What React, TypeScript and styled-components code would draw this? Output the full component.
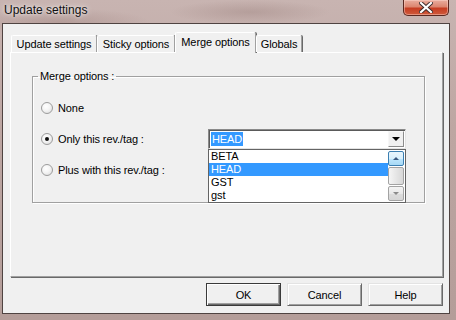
import React from "react";
import styled, { createGlobalStyle } from "styled-components";

const GlobalStyle = createGlobalStyle`
  html, body {
    margin: 0;
    padding: 0;
  }
  *, *::before, *::after {
    box-sizing: border-box;
  }
  body {
    width: 456px;
    height: 320px;
    overflow: hidden;
    font-family: "Liberation Sans", Arial, sans-serif;
    font-size: 11px;
    letter-spacing: -0.1px;
    color: #000;
  }
`;

const Window = styled.div`
  width: 456px;
  height: 320px;
  display: flex;
  flex-direction: column;
  background:
    radial-gradient(ellipse 90px 14px at 60px 22px, rgba(150, 120, 116, 0.35), transparent),
    radial-gradient(ellipse 80px 12px at 250px 12px, rgba(140, 112, 108, 0.3), transparent),
    linear-gradient(180deg, #c8b4b1 0%, #bda6a2 40%, #b49d99 100%);
`;

const TitleBar = styled.div`
  height: 23px;
  flex: none;
  display: flex;
  justify-content: space-between;
  align-items: flex-start;
  padding: 0 7px 0 4px;
`;

const Title = styled.div`
  font-family: "Liberation Sans", Arial, sans-serif;
  font-size: 12px;
  letter-spacing: 0;
  line-height: 20px;
  color: #111;
  text-shadow: 0 0 6px rgba(255, 255, 255, 0.8), 0 0 3px rgba(255, 255, 255, 0.6);
`;

const CloseButton = styled.div`
  width: 46px;
  height: 16px;
  border: 1px solid #5a2820;
  border-top: none;
  border-radius: 0 0 5px 5px;
  display: flex;
  align-items: center;
  justify-content: center;
  background: linear-gradient(
    180deg,
    #e9ad9e 0%,
    #dc8670 45%,
    #c63d22 55%,
    #cf5a3c 100%
  );
  box-shadow: inset 0 0 0 1px rgba(255, 220, 210, 0.45);
`;

const Client = styled.div`
  height: 291px;
  flex: none;
  margin: 0 6px 6px 2px;
  border: 1px solid #4f4341;
  background: #f0f0f0;
  display: flex;
  flex-direction: column;
  padding: 8px 6px 0 7px;
`;

const TabStrip = styled.div`
  height: 20px;
  flex: none;
  display: flex;
  align-items: flex-end;
  padding-left: 1px;
  position: relative;
  z-index: 1;
`;

const Tab = styled.div<{ $active?: boolean; $width: number }>`
  width: ${(p) => p.$width}px;
  height: ${(p) => (p.$active ? "21px" : "17px")};
  margin-bottom: ${(p) => (p.$active ? "-1px" : "0")};
  padding-bottom: ${(p) => (p.$active ? "3px" : "0")};
  display: flex;
  align-items: center;
  justify-content: center;
  background: #f0f0f0;
  border-top: 1px solid #fff;
  border-left: 1px solid #fff;
  border-right: 1px solid #a0a0a0;
  box-shadow: 1px 0 0 #696969;
  border-radius: 2px 2px 0 0;
  white-space: nowrap;
`;

const Panel = styled.div`
  height: 225px;
  flex: none;
  border-top: 1px solid #fff;
  border-left: 1px solid #fff;
  border-right: 1px solid #a0a0a0;
  border-bottom: 1px solid #a0a0a0;
  box-shadow: 1px 1px 0 #696969;
  padding: 17px 17px 0 21px;
`;

const Group = styled.fieldset`
  margin: 0;
  padding: 0 0 0 8px;
  height: 133px;
  border: 1px solid #a0a0a0;
  box-shadow: inset 1px 1px 0 #fff, 1px 1px 0 #fff;
  min-width: 0;
`;

const Legend = styled.legend`
  margin-left: -3px;
  padding: 0 2px;
  line-height: 13px;
`;

const Options = styled.div`
  display: flex;
  flex-direction: column;
  gap: 11px;
  padding-top: 15px;
`;

const OptionRow = styled.div`
  height: 20px;
  display: flex;
  align-items: center;
`;

const RadioLabel = styled.label`
  width: 167px;
  display: flex;
  align-items: center;
  gap: 5px;
  white-space: nowrap;
`;

const Radio = styled.span<{ $checked?: boolean }>`
  width: 12px;
  height: 12px;
  border-radius: 50%;
  border: 1px solid #9c9c9c;
  background: radial-gradient(circle at 40% 35%, #ffffff 0%, #f4f4f4 45%, #d9d9d9 100%);
  display: flex;
  align-items: center;
  justify-content: center;
  &::after {
    content: "";
    width: 4px;
    height: 4px;
    border-radius: 50%;
    background: ${(p) => (p.$checked ? "#111" : "transparent")};
  }
`;

const Combo = styled.div`
  position: relative;
  width: 198px;
  height: 20px;
  border: 1px solid;
  border-color: #8a8a8a #e3e3e3 #e3e3e3 #8a8a8a;
  box-shadow: inset 1px 1px 0 #5a5a5a;
  background: #fff;
  display: flex;
  align-items: center;
  padding-left: 2px;
`;

const Selected = styled.span`
  background: #3399ff;
  color: #fff;
  padding: 0 1px;
  line-height: 14px;
`;

const DropButton = styled.div`
  margin-left: auto;
  margin-right: 1px;
  width: 16px;
  height: 16px;
  background: #f0f0f0;
  border: 1px solid;
  border-color: #f7f7f7 #8c8c8c #8c8c8c #f7f7f7;
  display: flex;
  align-items: center;
  justify-content: center;
`;

const Triangle = styled.span<{ $up?: boolean; $color: string; $size: number }>`
  width: 0;
  height: 0;
  border-left: ${(p) => p.$size}px solid transparent;
  border-right: ${(p) => p.$size}px solid transparent;
  ${(p) =>
    p.$up
      ? `border-bottom: ${p.$size}px solid ${p.$color};`
      : `border-top: ${p.$size}px solid ${p.$color};`}
`;

const DropList = styled.div`
  position: absolute;
  top: calc(100% + 1px);
  left: -1px;
  width: 198px;
  border: 1px solid #646464;
  background: #fff;
  display: flex;
  z-index: 2;
`;

const Items = styled.div`
  flex: 1;
`;

const Item = styled.div<{ $active?: boolean }>`
  height: 13px;
  line-height: 13px;
  padding-left: 2px;
  background: ${(p) => (p.$active ? "#3399ff" : "transparent")};
  color: ${(p) => (p.$active ? "#fff" : "#000")};
`;

const ScrollBar = styled.div`
  width: 17px;
  display: flex;
  flex-direction: column;
  gap: 1px;
  padding: 1px 1px 1px 0;
`;

const ScrollButton = styled.div<{ $hover?: boolean }>`
  height: 15px;
  border: 1px solid ${(p) => (p.$hover ? "#3c7fb1" : "#a3a3a3")};
  border-radius: 2px;
  background: ${(p) =>
    p.$hover
      ? "linear-gradient(180deg, #eaf6fd 0%, #d9f0fc 50%, #bee6fd 51%, #a7d9f5 100%)"
      : "linear-gradient(180deg, #f4f4f4 0%, #e8e8e8 50%, #dcdcdc 51%, #d6d6d6 100%)"};
  display: flex;
  align-items: center;
  justify-content: center;
`;

const Thumb = styled.div`
  flex: 1;
  border: 1px solid #a3a3a3;
  border-radius: 2px;
  background: linear-gradient(90deg, #f5f5f5 0%, #e6e6e6 50%, #d8d8d8 100%);
`;

const ButtonRow = styled.div`
  margin-top: 6px;
  display: flex;
  justify-content: flex-end;
  gap: 6px;
`;

const Button = styled.button<{ $default?: boolean }>`
  width: 75px;
  height: 23px;
  margin: 0;
  padding: 0;
  font-family: "Liberation Sans", Arial, sans-serif;
  font-size: 11px;
  letter-spacing: -0.1px;
  color: #000;
  background: #f0f0f0;
  border: 1px solid;
  border-color: ${(p) =>
    p.$default ? "#3a3a3a" : "#e3e3e3 #696969 #696969 #e3e3e3"};
  box-shadow: ${(p) =>
    p.$default
      ? "inset 1px 1px 0 #fff, inset -1px -1px 0 #696969, inset -2px -2px 0 #a0a0a0"
      : "inset 1px 1px 0 #fff, inset -1px -1px 0 #a0a0a0"};
`;

const tabs = [
  { label: "Update settings", width: 86 },
  { label: "Sticky options", width: 78 },
  { label: "Merge options", width: 81, active: true },
  { label: "Globals", width: 46 },
];

const items = ["BETA", "HEAD", "GST", "gst"];

export default function App() {
  return (
    <>
      <GlobalStyle />
      <Window>
        <TitleBar>
          <Title>Update settings</Title>
          <CloseButton>
            <svg width="14" height="11" viewBox="0 0 14 11">
              <path
                d="M2 1 L12 10 M12 1 L2 10"
                stroke="#3b2a2a"
                strokeWidth="4"
                strokeLinecap="square"
              />
              <path
                d="M2 1 L12 10 M12 1 L2 10"
                stroke="#fff"
                strokeWidth="2.2"
                strokeLinecap="square"
              />
            </svg>
          </CloseButton>
        </TitleBar>
        <Client>
          <TabStrip>
            {tabs.map((t) => (
              <Tab key={t.label} $width={t.width} $active={t.active}>
                {t.label}
              </Tab>
            ))}
          </TabStrip>
          <Panel>
            <Group>
              <Legend>Merge options :</Legend>
              <Options>
                <OptionRow>
                  <RadioLabel>
                    <Radio />
                    None
                  </RadioLabel>
                </OptionRow>
                <OptionRow>
                  <RadioLabel>
                    <Radio $checked />
                    Only this rev./tag :
                  </RadioLabel>
                  <Combo>
                    <Selected>HEAD</Selected>
                    <DropButton>
                      <Triangle $color="#000" $size={4} />
                    </DropButton>
                    <DropList>
                      <Items>
                        {items.map((it) => (
                          <Item key={it} $active={it === "HEAD"}>
                            {it}
                          </Item>
                        ))}
                      </Items>
                      <ScrollBar>
                        <ScrollButton $hover>
                          <Triangle $up $color="#3d5a80" $size={3} />
                        </ScrollButton>
                        <Thumb />
                        <ScrollButton>
                          <Triangle $color="#8a8a8a" $size={3} />
                        </ScrollButton>
                      </ScrollBar>
                    </DropList>
                  </Combo>
                </OptionRow>
                <OptionRow>
                  <RadioLabel>
                    <Radio />
                    Plus with this rev./tag :
                  </RadioLabel>
                </OptionRow>
              </Options>
            </Group>
          </Panel>
          <ButtonRow>
            <Button $default>OK</Button>
            <Button>Cancel</Button>
            <Button>Help</Button>
          </ButtonRow>
        </Client>
      </Window>
    </>
  );
}
